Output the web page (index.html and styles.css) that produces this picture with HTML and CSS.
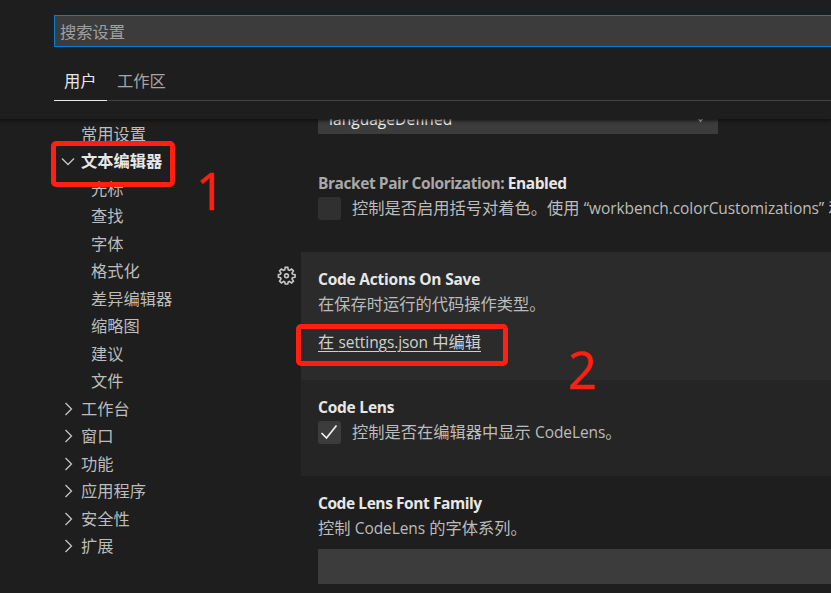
FILE: index.html
```html
<!DOCTYPE html>
<html lang="zh-CN">
<head>
<meta charset="utf-8">
<title>设置</title>
<link rel="stylesheet" href="styles.css">
</head>
<body>
<div class="editor">
  <header class="header">
    <div class="search">搜索设置</div>
    <nav class="tabs"><span class="tab active">用户</span><span class="tab">工作区</span></nav>
  </header>
  <div class="body">
    <ul class="toc">
      <li class="row">常用设置</li>
      <li class="row current"><svg class="chev" viewBox="0 0 20 20"><path d="M4 7.500 10 13.500 16 7.500"/></svg>文本编辑器</li>
      <li class="row child">光标</li>
      <li class="row child">查找</li>
      <li class="row child">字体</li>
      <li class="row child">格式化</li>
      <li class="row child">差异编辑器</li>
      <li class="row child">缩略图</li>
      <li class="row child">建议</li>
      <li class="row child">文件</li>
      <li class="row"><svg class="chev" viewBox="0 0 20 20"><path d="M7.500 4 13.500 10 7.500 16"/></svg>工作台</li>
      <li class="row"><svg class="chev" viewBox="0 0 20 20"><path d="M7.500 4 13.500 10 7.500 16"/></svg>窗口</li>
      <li class="row"><svg class="chev" viewBox="0 0 20 20"><path d="M7.500 4 13.500 10 7.500 16"/></svg>功能</li>
      <li class="row"><svg class="chev" viewBox="0 0 20 20"><path d="M7.500 4 13.500 10 7.500 16"/></svg>应用程序</li>
      <li class="row"><svg class="chev" viewBox="0 0 20 20"><path d="M7.500 4 13.500 10 7.500 16"/></svg>安全性</li>
      <li class="row"><svg class="chev" viewBox="0 0 20 20"><path d="M7.500 4 13.500 10 7.500 16"/></svg>扩展</li>
    </ul>
    <main class="settings">
      <div class="select-clip"><div class="select"><span class="latin">languageDefined</span><svg class="select-arrow" viewBox="0 0 10 10"><path d="M2 4 5 7.500 8 4"/></svg></div></div>
      <section class="item bracket">
        <h3 class="title"><span class="category">Bracket Pair Colorization: </span>Enabled</h3>
        <div class="check-line"><span class="checkbox"></span><p class="desc">控制是否启用括号对着色。使用 <span class="latin quoted">“workbench.colorCustomizations”</span> 和</p></div>
      </section>
      <section class="item focused">
        <svg class="gear" viewBox="0 0 20 20"><path d="M8.700 1.500h2.600l.6 2.700 1.200.5 2.300-1.500 1.900 1.900-1.500 2.300.5 1.200 2.700.6v2.600l-2.700.6-.5 1.200 1.500 2.300-1.900 1.900-2.300-1.500-1.200.5-.6 2.200H8.700l-.6-2.200-1.200-.5-2.300 1.500-1.900-1.900 1.500-2.300-.5-1.200-2.200-.6V9.200l2.200-.6.5-1.200-1.500-2.300 1.900-1.900 2.300 1.500 1.200-.5z"/><circle cx="10" cy="10.300" r="2"/></svg>
        <h3 class="title wide">Code Actions On Save</h3>
        <p class="desc">在保存时运行的代码操作类型。</p>
        <a class="link">在 <span class="latin">settings.json</span> 中编辑</a>
      </section>
      <section class="item hovered">
        <h3 class="title wide">Code Lens</h3>
        <div class="check-line"><span class="checkbox on"><svg viewBox="0 0 22 22"><path d="M3.500 12 8.500 17 18.500 4.500"/></svg></span><p class="desc">控制是否在编辑器中显示 <span class="latin">CodeLens</span>。</p></div>
      </section>
      <section class="item">
        <h3 class="title">Code Lens Font Family</h3>
        <p class="desc">控制 <span class="latin">CodeLens</span> 的字体系列。</p>
        <div class="input"></div>
      </section>
    </main>
  </div>
  <div class="mark mark-toc"></div>
  <div class="mark mark-link"></div>
  <span class="number number-one">1</span>
  <span class="number number-two">2</span>
</div>
</body>
</html>
```
FILE: styles.css
```css
* { box-sizing: border-box; }
body {
  margin: 0;
  background: #1e1e1e;
  color: #bcbcbc;
  font: 16.25px/24px "Open Sans", "Noto Sans CJK SC", sans-serif;
}
.editor {
  position: relative;
  width: 831px;
  height: 593px;
  overflow: hidden;
  display: flex;
  flex-direction: column;
}
.header {
  flex: none;
  height: 119px;
  padding: 15px 0 0 54px;
  position: relative;
  z-index: 1;
  background: #1e1e1e;
  box-shadow: 0 0 4px 1px #0c0c0c;
}
.search {
  height: 32px;
  padding-left: 5px;
  border: 1px solid #007fd4;
  border-right: 0;
  background: #3c3c3c;
  color: #a0a0a0;
  line-height: 32px;
}
.tabs {
  display: flex;
  height: 38px;
  margin-top: 16px;
  border-bottom: 1px solid #414141;
}
.tab { height: 38px; padding: 0 10px; line-height: 36px; color: #a6a6a6; }
.tab.active { width: 53px; border-bottom: 1px solid #e7e7e7; color: #e7e7e7; }
.body { flex: 1; min-height: 0; display: flex; }
.toc { flex: none; width: 301px; margin: 0; padding: 1px 0 0 58px; list-style: none; }
.row {
  display: flex;
  align-items: center;
  height: 27.5px;
  padding-left: 23px;
}
.row.child { padding-left: 33px; }
.row.current { color: #e7e7e7; font-weight: 700; }
.chev { width: 20px; height: 20px; margin: 0 3px 0 -23px; fill: none; stroke: #c5c5c5; stroke-width: 1.300; }
.settings { flex: 1; min-width: 0; overflow: visible; }
.select-clip { height: 15px; margin-left: 17px; display: flex; align-items: flex-end; }
.select {
  width: 400px;
  height: 32px;
  padding: 1px 12px 0 11px;
  background: #3c3c3c;
  color: #f0f0f0;
  display: flex;
  align-items: center;
  justify-content: space-between;
}
.select .latin { letter-spacing: .05px; }
.select-arrow { width: 11px; height: 11px; fill: none; stroke: #c5c5c5; stroke-width: 1.300; }
.item { position: relative; padding: 15px 0 0 17px; }
.item.bracket { margin-top: 22px; height: 96px; }
.item.focused { height: 128px; background: #2b2b2b; }
.item.hovered { height: 96px; background: #252525; }
.title { margin: 0; font-size: 15.500px; font-weight: 700; line-height: 24px; color: #e7e7e7; white-space: pre; letter-spacing: -.43px; }
.title.wide { letter-spacing: -.22px; }
.category { color: #a9a9a9; }
.desc { margin: 1px 0 0; white-space: nowrap; }
.latin { font-size: 15.500px; letter-spacing: -.08px; }
.link { display: block; width: max-content; margin-top: 14px; color: #d0d0d0; text-decoration: underline; text-underline-offset: 3px; white-space: nowrap; }
.check-line { display: flex; }
.checkbox {
  flex: none;
  width: 23px;
  height: 23px;
  margin: 2px 11px 0 0;
  border-radius: 3px;
  background: #303030;
}
.checkbox.on { background: #3c3c3c; }
.checkbox svg { display: block; width: 22px; height: 22px; fill: none; stroke: #f0f0f0; stroke-width: 1.700; }
.gear { position: absolute; left: -24px; top: 14px; width: 19px; height: 19px; fill: none; stroke: #c5c5c5; stroke-width: 1.700; }
.input { height: 35px; margin-top: 9px; background: #3c3c3c; }
.mark { position: absolute; z-index: 2; border: 5px solid #ff2011; border-radius: 5px; }
.mark-toc { left: 51px; top: 141px; width: 124px; height: 46px; }
.mark-link { left: 296px; top: 324px; width: 212px; height: 42px; }
.number { position: absolute; z-index: 2; color: #ff2011; font: 500 51px/60px "Open Sans", sans-serif; -webkit-text-stroke: .5px #ff2011; }
.number-one { left: 196px; top: 160px; }
.number-two { left: 568px; top: 339px; }
```
